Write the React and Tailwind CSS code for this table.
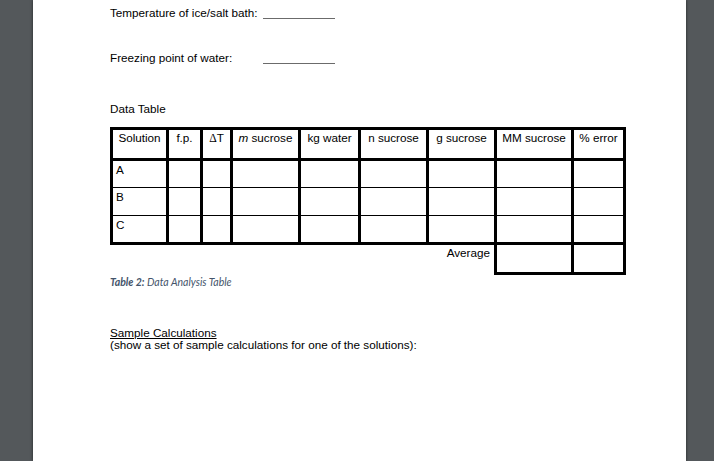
import React from 'react';

const cols = [
  { key: 'sol', label: 'Solution', w: 'w-[56px]' },
  { key: 'fp', label: 'f.p.', w: 'w-[34px]' },
  { key: 'dt', label: 'dT', w: 'w-[30px]' },
  { key: 'm', label: 'm sucrose', w: 'w-[68px]' },
  { key: 'kg', label: 'kg water', w: 'w-[60px]' },
  { key: 'n', label: 'n sucrose', w: 'w-[68px]' },
  { key: 'g', label: 'g sucrose', w: 'w-[68px]' },
  { key: 'mm', label: 'MM sucrose', w: 'w-[77px]' },
  { key: 'err', label: '% error', w: 'w-[49px]' },
];

function HeaderLabel({ col }) {
  if (col.key === 'dt') {
    return (
      <span>
        <span className="font-['Liberation_Serif',serif]">Δ</span>T
      </span>
    );
  }
  if (col.key === 'm') {
    return (
      <span>
        <span className="italic">m</span> sucrose
      </span>
    );
  }
  return <span>{col.label}</span>;
}

function DataRow({ label, className }) {
  return (
    <div className={`flex ${className}`}>
      {cols.map((c, i) => (
        <div
          key={c.key}
          className={`${c.w} h-full shrink-0 ${i < cols.length - 1 ? 'border-r-[3px] border-black' : ''} pl-[3px] pt-[2px]`}
        >
          {i === 0 ? label : null}
        </div>
      ))}
    </div>
  );
}

function Blank({ label }) {
  return (
    <div className="flex items-end h-[13px]">
      <span className="w-[153px] leading-[13px]">{label}</span>
      <div className="w-[72px] h-px bg-[#6b6b6b]" />
    </div>
  );
}

export default function App() {
  return (
    <div className="flex w-[714px] h-[461px] overflow-hidden bg-[#54585b] font-['Liberation_Sans',Arial,sans-serif] text-[11.7px] text-black">
      <div className="w-[33px] shrink-0" />

      <div className="w-[653px] shrink-0 bg-white shadow-[0_0_3px_rgba(0,0,0,0.6)] pl-[77px] pt-[6px]">
        <Blank label="Temperature of ice/salt bath:" />
        <div className="h-[32px]" />
        <Blank label="Freezing point of water:" />

        <div className="mt-[38px] leading-[13px]">Data Table</div>

        {/* data table */}
        <div className="mt-[12px] w-[516px] border-[3px] border-black">
          <div className="flex h-[31px] border-b-[3px] border-black">
            {cols.map((c, i) => (
              <div
                key={c.key}
                className={`${c.w} h-full shrink-0 ${i < cols.length - 1 ? 'border-r-[3px] border-black' : ''} text-center pt-[1px] leading-[13px] whitespace-nowrap`}
              >
                <HeaderLabel col={c} />
              </div>
            ))}
          </div>
          <DataRow label="A" className="h-[27px] border-b border-black leading-[13px]" />
          <DataRow label="B" className="h-[28px] border-b border-black leading-[13px]" />
          <DataRow label="C" className="h-[26px] leading-[13px]" />
        </div>

        <div className="flex">
          <div className="w-[384px] shrink-0 text-right pr-[4px] pt-[1px] leading-[13px]">Average</div>
          <div className="flex h-[30px] border-x-[3px] border-b-[3px] border-black">
            <div className="w-[77px] h-full border-r-[3px] border-black" />
            <div className="w-[49px] h-full" />
          </div>
        </div>

        <div className="mt-[1px] font-['Lato',sans-serif] italic text-[10.5px] leading-[12px] text-[#44546a]">
          <span className="font-bold">Table 2:</span> Data Analysis Table
        </div>

        <div className="mt-[39px] leading-[12px]">
          <div className="underline underline-offset-[1px]">Sample Calculations</div>
          <div>(show a set of sample calculations for one of the solutions):</div>
        </div>
      </div>

      <div className="flex-1" />
    </div>
  );
}
